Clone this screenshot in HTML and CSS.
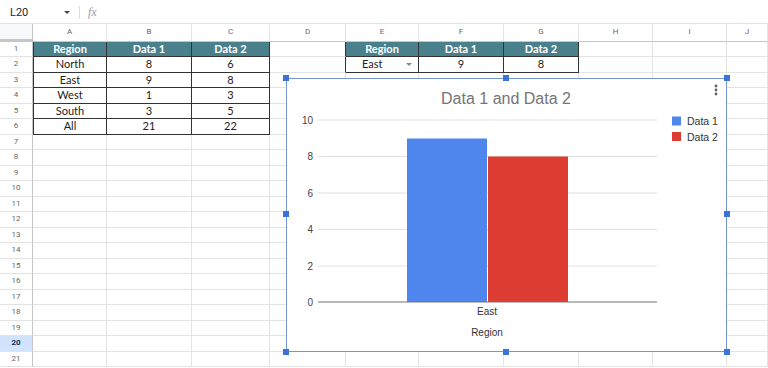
FILE: index.html
```html
<!DOCTYPE html>
<html lang="en">
<head>
	<meta charset="UTF-8">
	<title>Sheet</title>
	<link rel="stylesheet" href="styles.css">
</head>
<body>
	<div class="formula-bar">
		<span class="name-box">L20</span>
		<span class="caret"></span>
		<span class="sep"></span>
		<span class="fx">fx</span>
	</div>

	<div class="sheet">
		<table class="grid">
			<colgroup>
				<col class="c-rn"><col class="c-a"><col class="c-b"><col class="c-c"><col class="c-d"><col class="c-e"><col class="c-f"><col class="c-g"><col class="c-h"><col class="c-i"><col>
			</colgroup>
			<tr class="col-head">
				<th class="corner"></th><th>A</th><th>B</th><th>C</th><th>D</th><th>E</th><th>F</th><th>G</th><th>H</th><th>I</th><th>J</th>
			</tr>
			<tr><th>1</th><td class="h d">Region</td><td class="h d">Data 1</td><td class="h d">Data 2</td><td class="edge"></td><td class="h d">Region</td><td class="h d">Data 1</td><td class="h d">Data 2</td><td></td><td></td><td></td></tr>
			<tr><th>2</th><td class="d">North</td><td class="d">8</td><td class="d">6</td><td class="edge"></td><td class="d"><div class="drop"><span>East</span><span class="caret small"></span></div></td><td class="d">9</td><td class="d">8</td><td></td><td></td><td></td></tr>
			<tr><th>3</th><td class="d">East</td><td class="d">9</td><td class="d">8</td><td></td><td></td><td></td><td></td><td></td><td></td><td></td></tr>
			<tr><th>4</th><td class="d">West</td><td class="d">1</td><td class="d">3</td><td></td><td></td><td></td><td></td><td></td><td></td><td></td></tr>
			<tr><th>5</th><td class="d">South</td><td class="d">3</td><td class="d">5</td><td></td><td></td><td></td><td></td><td></td><td></td><td></td></tr>
			<tr><th>6</th><td class="d">All</td><td class="d">21</td><td class="d">22</td><td></td><td></td><td></td><td></td><td></td><td></td><td></td></tr>
			<tr><th>7</th><td></td><td></td><td></td><td></td><td></td><td></td><td></td><td></td><td></td><td></td></tr>
			<tr><th>8</th><td></td><td></td><td></td><td></td><td></td><td></td><td></td><td></td><td></td><td></td></tr>
			<tr><th>9</th><td></td><td></td><td></td><td></td><td></td><td></td><td></td><td></td><td></td><td></td></tr>
			<tr><th>10</th><td></td><td></td><td></td><td></td><td></td><td></td><td></td><td></td><td></td><td></td></tr>
			<tr><th>11</th><td></td><td></td><td></td><td></td><td></td><td></td><td></td><td></td><td></td><td></td></tr>
			<tr><th>12</th><td></td><td></td><td></td><td></td><td></td><td></td><td></td><td></td><td></td><td></td></tr>
			<tr><th>13</th><td></td><td></td><td></td><td></td><td></td><td></td><td></td><td></td><td></td><td></td></tr>
			<tr><th>14</th><td></td><td></td><td></td><td></td><td></td><td></td><td></td><td></td><td></td><td></td></tr>
			<tr><th>15</th><td></td><td></td><td></td><td></td><td></td><td></td><td></td><td></td><td></td><td></td></tr>
			<tr><th>16</th><td></td><td></td><td></td><td></td><td></td><td></td><td></td><td></td><td></td><td></td></tr>
			<tr><th>17</th><td></td><td></td><td></td><td></td><td></td><td></td><td></td><td></td><td></td><td></td></tr>
			<tr><th>18</th><td></td><td></td><td></td><td></td><td></td><td></td><td></td><td></td><td></td><td></td></tr>
			<tr><th>19</th><td></td><td></td><td></td><td></td><td></td><td></td><td></td><td></td><td></td><td></td></tr>
			<tr class="active"><th>20</th><td></td><td></td><td></td><td></td><td></td><td></td><td></td><td></td><td></td><td></td></tr>
			<tr><th>21</th><td></td><td></td><td></td><td></td><td></td><td></td><td></td><td></td><td></td><td></td></tr>
		</table>

		<!-- chart floats over the cells -->
		<div class="chart">
			<svg class="plot" width="439" height="272" viewBox="1 1 439 272">
				<text class="title" x="220" y="26">Data 1 and Data 2</text>

				<g class="gridlines">
					<line x1="32" y1="42" x2="371" y2="42"/>
					<line x1="32" y1="78.5" x2="371" y2="78.5"/>
					<line x1="32" y1="115" x2="371" y2="115"/>
					<line x1="32" y1="151.5" x2="371" y2="151.5"/>
					<line x1="32" y1="188" x2="371" y2="188"/>
				</g>

				<g class="ticks">
					<text x="27" y="45.5">10</text>
					<text x="27" y="82">8</text>
					<text x="27" y="118.5">6</text>
					<text x="27" y="155">4</text>
					<text x="27" y="191.5">2</text>
					<text x="27" y="227.5">0</text>
				</g>

				<rect class="bar-1" x="121" y="60.5" width="80" height="163.5"/>
				<rect class="bar-2" x="202" y="78.5" width="80" height="145.5"/>

				<line class="axis" x1="32" y1="224" x2="371" y2="224"/>

				<text class="label" x="201" y="237">East</text>
				<text class="label" x="201" y="258">Region</text>

				<rect class="bar-1" x="386" y="38.5" width="9" height="9"/>
				<text class="legend" x="401" y="47">Data 1</text>
				<rect class="bar-2" x="386" y="54" width="9" height="9"/>
				<text class="legend" x="401" y="62.5">Data 2</text>

				<g class="menu">
					<circle cx="430" cy="8" r="1.4"/>
					<circle cx="430" cy="12" r="1.4"/>
					<circle cx="430" cy="16" r="1.4"/>
				</g>
			</svg>

			<span class="handle tl"></span>
			<span class="handle tc"></span>
			<span class="handle tr"></span>
			<span class="handle ml"></span>
			<span class="handle mr"></span>
			<span class="handle bl"></span>
			<span class="handle bc"></span>
			<span class="handle br"></span>
		</div>
	</div>
</body>
</html>
```

FILE: styles.css
```css
* {
	padding: 0;
	margin: 0;
	box-sizing: border-box;
}

body {
	width: 768px;
	height: 368px;
	overflow: hidden;
	background: #fff;
	font-family: Roboto, "Liberation Sans", Arial, sans-serif;
}

/* formula bar */

.formula-bar {
	height: 24px;
	padding-top: 2px;
	display: flex;
	align-items: center;
	border-bottom: 1px solid #e1e3e1;
	color: #1f1f1f;
}

.name-box {
	font-size: 11px;
	margin-left: 10px;
	width: 54px;
}

.caret {
	width: 0;
	height: 0;
	border-left: 3px solid transparent;
	border-right: 3px solid transparent;
	border-top: 3px solid #444;
}

.sep {
	width: 1px;
	height: 13px;
	background: #dadce0;
	margin-left: 9px;
}

.fx {
	font-family: "Liberation Serif", serif;
	font-style: italic;
	font-size: 12px;
	color: #9aa0a6;
	margin-left: 8px;
}

/* grid */

.sheet {
	position: relative;
}

.grid {
	width: 768px;
	table-layout: fixed;
	border-collapse: separate;
	border-spacing: 0;
}

.c-rn { width: 33px; }
.c-a { width: 74px; }
.c-b { width: 85px; }
.c-c { width: 78px; }
.c-d { width: 76px; }
.c-e { width: 73px; }
.c-f { width: 85px; }
.c-g { width: 75px; }
.c-h { width: 74px; }
.c-i { width: 74px; }

.grid tr {
	height: 15.5px;
}

.grid td,
.grid th {
	border-right: 1px solid #e2e3e3;
	border-bottom: 1px solid #e2e3e3;
	text-align: center;
	vertical-align: middle;
	overflow: hidden;
	white-space: nowrap;
}

.grid th {
	font-weight: normal;
	font-size: 8px;
	color: #666;
	line-height: 14px;
}

.grid tr > th:first-child {
	border-right: 1px solid #c4c7c5;
}

.grid .col-head {
	height: 17.5px;
}

.col-head th {
	border-bottom: 1px solid #c4c7c5;
	border-right: 1px solid #e2e3e3;
}

.col-head .corner {
	background: #f8f9fa;
	border-right: 3px solid #c4c7c5;
	border-bottom: 3px solid #c4c7c5;
}

.grid td {
	font-family: Lato, "Open Sans", sans-serif;
	font-size: 11px;
	color: #222;
	line-height: 14px;
}

.grid td.d {
	border-right-color: #333;
	border-bottom-color: #333;
}

.grid tr > td:nth-child(2) {
	border-left: 1px solid #333;
}

.grid tr:nth-child(n+8) > td:nth-child(2) {
	border-left: none;
}

.grid td.edge {
	border-right-color: #333;
}

.grid td.h {
	background: #4a7f8c;
	color: #fff;
	font-weight: bold;
}

.drop {
	display: flex;
	align-items: center;
	justify-content: space-between;
	padding: 0 6px 0 16px;
}

.caret.small {
	border-top-color: #888;
}

.active th {
	background: #d3e3fd;
	color: #0b2a5a;
	font-weight: bold !important;
}

/* chart */

.chart {
	position: absolute;
	left: 286px;
	top: 54px;
	width: 441px;
	height: 274px;
	border: 1px solid #7696d3;
	background: #fff;
}

.plot {
	display: block;
	font-family: "Liberation Sans", Arial, sans-serif;
}

.plot .title {
	font-size: 16px;
	fill: #757575;
	text-anchor: middle;
}

.gridlines line {
	stroke: #e0e0e0;
	stroke-width: 1;
}

.ticks text {
	font-size: 10px;
	fill: #444;
	text-anchor: end;
}

.bar-1 { fill: #4f86ee; }
.bar-2 { fill: #dd3d33; }

.axis {
	stroke: #757575;
	stroke-width: 1;
}

.plot .label {
	font-size: 10px;
	fill: #333;
	text-anchor: middle;
}

.plot .legend {
	font-size: 10.5px;
	fill: #333;
}

.menu circle {
	fill: #5f6368;
}

.handle {
	position: absolute;
	width: 6px;
	height: 6px;
	background: #3b73d9;
}

.handle.tl { left: -4px; top: -4px; }
.handle.tc { left: 216px; top: -4px; }
.handle.tr { right: -4px; top: -4px; }
.handle.ml { left: -4px; top: 132px; }
.handle.mr { right: -4px; top: 132px; }
.handle.bl { left: -4px; bottom: -4px; }
.handle.bc { left: 216px; bottom: -4px; }
.handle.br { right: -4px; bottom: -4px; }
```
